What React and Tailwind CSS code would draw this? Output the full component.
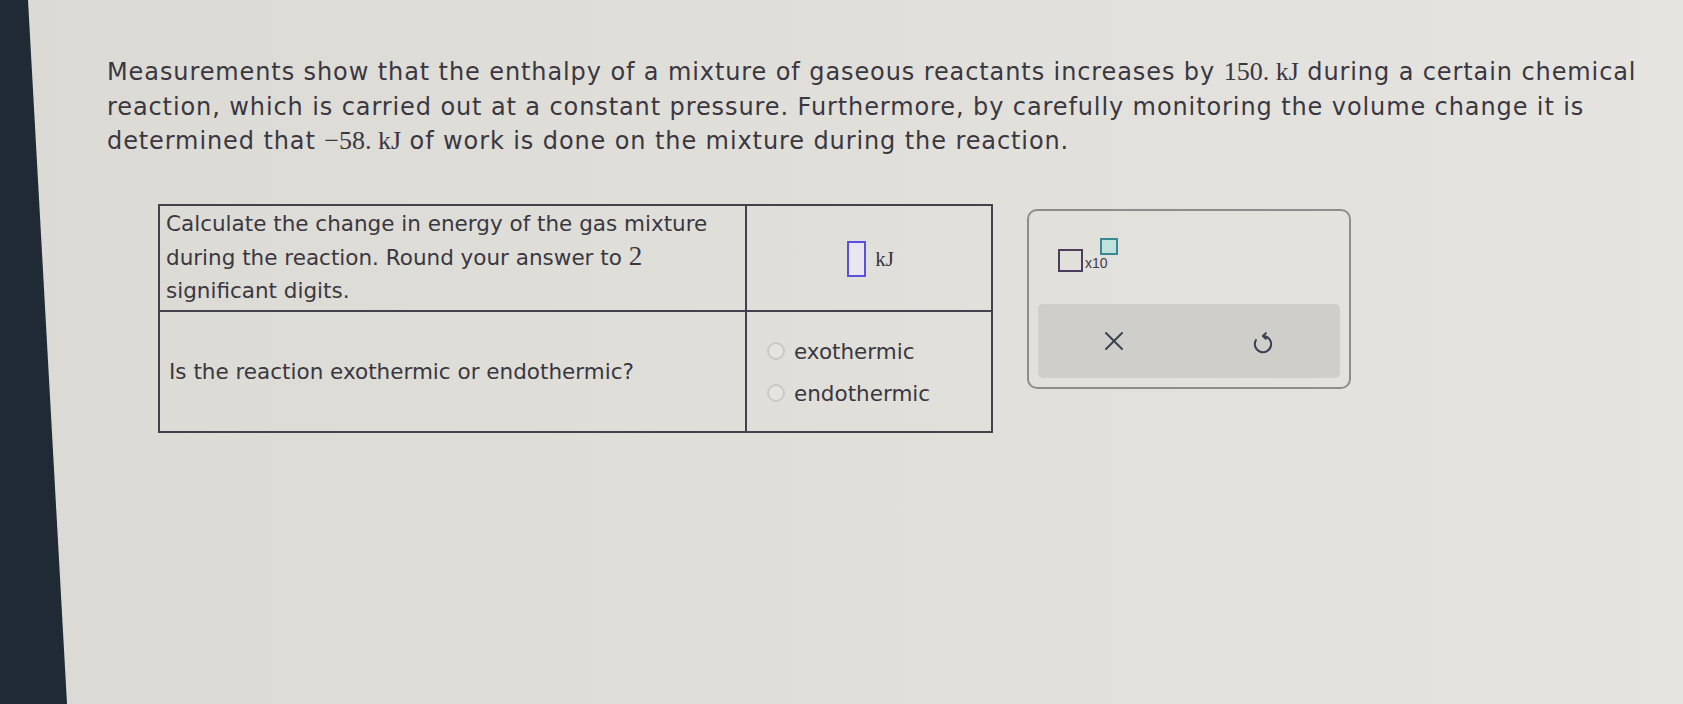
import React from 'react';

const serif = "font-['Liberation_Serif',serif]";

const UndoIcon = () => (
  <svg width="26" height="26" viewBox="0 0 24 24" fill="none" stroke="#3b4150" strokeWidth="1.9" strokeLinecap="round" strokeLinejoin="round">
    <path d="M12 5.5 A7.5 7.5 0 1 1 5.5 9.25" />
    <path d="M14.6 2.9 L12 5.5 L14.6 8.1" />
  </svg>
);

const CloseIcon = () => (
  <svg width="22" height="22" viewBox="0 0 22 22" fill="none" stroke="#3b4150" strokeWidth="2" strokeLinecap="round">
    <path d="M3 3 L19 19" />
    <path d="M19 3 L3 19" />
  </svg>
);

const Radio = ({ label }) => (
  <label className="flex items-center gap-[9px] h-[42px]">
    <span className="w-[18px] h-[18px] rounded-full border-2 border-[#cac8c4] bg-[#e6e4e0]" />
    <span>{label}</span>
  </label>
);

export default function App() {
  return (
    <div className="flex min-h-[704px] w-full bg-gradient-to-r from-[#dcdad4] to-[#e6e4e0] font-['DejaVu_Sans',sans-serif] text-[#3a3741] overflow-hidden">
      {/* dark bezel on the left, slanted by the camera angle */}
      <div className="w-[68px] shrink-0 bg-[#1f2a35] [clip-path:polygon(0_0,28px_0,67px_100%,0_100%)]" />

      <div className="flex-1 pl-[39px] pt-[55px]">
        <p className="text-[24px] leading-[34.5px] tracking-[0.9px] whitespace-nowrap">
          Measurements show that the enthalpy of a mixture of gaseous reactants increases by{' '}
          <span className={`${serif} text-[26px] tracking-normal`}>150. kJ</span> during a certain chemical
          <br />
          reaction, which is carried out at a constant pressure. Furthermore, by carefully monitoring the volume change it is
          <br />
          determined that <span className={`${serif} text-[26px] tracking-normal`}>−58. kJ</span> of work is done on the mixture during the reaction.
        </p>

        <div className="flex items-start gap-[34px] mt-[45px] ml-[51px]">
          <table className="border-collapse text-[21.5px] leading-[33px]">
            <tbody>
              <tr className="h-[106px]">
                <td className="w-[587px] border-2 border-[#45404c] align-top pl-[6px] pr-[8px] pt-[1px]">
                  Calculate the change in energy of the gas mixture
                  <br />
                  during the reaction. Round your answer to <span className={`${serif} text-[27px]`}>2</span>
                  <br />
                  significant digits.
                </td>
                <td className="w-[246px] border-2 border-[#45404c] align-middle">
                  <div className="flex items-center justify-center gap-[9px] pl-[3px] pt-[3px]">
                    <span className="w-[19px] h-[36px] border-2 border-[#5b4fe0] bg-[#e9e7ee]" />
                    <span className={`${serif} text-[21px]`}>kJ</span>
                  </div>
                </td>
              </tr>
              <tr className="h-[121px]">
                <td className="border-2 border-[#45404c] align-middle pl-[9px]">
                  Is the reaction exothermic or endothermic?
                </td>
                <td className="border-2 border-[#45404c] align-middle pl-[20px]">
                  <div className="flex flex-col pt-[2px]">
                    <Radio label="exothermic" />
                    <Radio label="endothermic" />
                  </div>
                </td>
              </tr>
            </tbody>
          </table>

          <div className="mt-[5px] w-[324px] rounded-[10px] border-2 border-[#8e8d8c] p-[9px] pt-0">
            <div className="h-[93px] pl-[20px] pt-[27px]">
              <div className="flex items-start">
                <span className="mt-[11px] w-[25px] h-[23px] border-2 border-[#4b3d5c]" />
                <span className="mt-[19px] ml-[2px] font-['Liberation_Sans',sans-serif] text-[14px] leading-[13px] text-[#3e3b46]">x10</span>
                <span className="-ml-[8px] w-[18px] h-[17px] border-2 border-[#3a8891] bg-[#bfe2de]" />
              </div>
            </div>
            <div className="grid grid-cols-2 h-[74px] rounded-[5px] bg-[#cfcecb]">
              <button className="flex items-center justify-center">
                <CloseIcon />
              </button>
              <button className="flex items-center justify-center pt-[4px] pr-[4px]">
                <UndoIcon />
              </button>
            </div>
          </div>
        </div>
      </div>
    </div>
  );
}
